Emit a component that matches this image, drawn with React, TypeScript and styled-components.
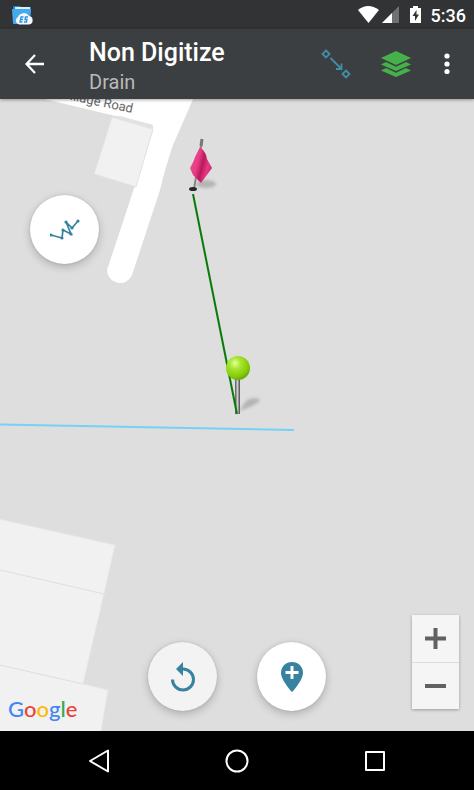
import React from "react";
import styled, { createGlobalStyle } from "styled-components";

const GlobalStyle = createGlobalStyle`
  * { box-sizing: border-box; }
  body {
    margin: 0;
    font-family: Roboto, "Liberation Sans", sans-serif;
  }
`;

const TEAL = "#37839f";

const Screen = styled.div`
  display: flex;
  flex-direction: column;
  min-height: 100vh;
  background: #000;
`;

const StatusBar = styled.div`
  display: flex;
  align-items: center;
  justify-content: space-between;
  height: 29px;
  padding: 0 8px 0 12px;
  background: #323335;
  color: #fff;
`;

const StatusIcons = styled.div`
  display: flex;
  align-items: center;
`;

const Clock = styled.time`
  margin-left: 8px;
  font-size: 18px;
  line-height: 24px;
  font-weight: 500;
  padding-top: 3px;
`;

const Toolbar = styled.header`
  position: relative;
  z-index: 2;
  display: flex;
  align-items: center;
  height: 70px;
  padding: 0 14px 0 15px;
  background: #3c3f41;
  color: #fff;
  box-shadow: 0 1px 3px rgba(0, 0, 0, 0.35);
`;

const IconButton = styled.button`
  display: flex;
  align-items: center;
  justify-content: center;
  flex: none;
  width: 40px;
  height: 48px;
  padding: 0;
  border: 0;
  background: none;
  color: inherit;
  cursor: pointer;
`;

const Titles = styled.div`
  flex: 1;
  min-width: 0;
  padding: 6px 0 0 34px;
`;

const Title = styled.h1`
  margin: 0;
  font-size: 25px;
  line-height: 30px;
  font-weight: 500;
  white-space: nowrap;
`;

const Subtitle = styled.p`
  margin: 0;
  font-size: 20px;
  line-height: 28px;
  color: #b9babb;
`;

const Actions = styled.div`
  display: flex;
  gap: 20px;
`;

const OverflowButton = styled(IconButton)`
  width: 26px;
  margin-left: 18px;
`;

const MapArea = styled.main`
  position: relative;
  flex: 1;
  min-height: 400px;
  overflow: hidden;
  background: #dedede;
`;

const MapCanvas = styled.svg`
  position: absolute;
  inset: 0;
  width: 100%;
  height: 100%;
`;

const RoundButton = styled.button<{ $muted?: boolean }>`
  display: flex;
  align-items: center;
  justify-content: center;
  width: 69px;
  height: 69px;
  padding: 0;
  border: 0;
  border-radius: 50%;
  background: ${(p) => (p.$muted ? "#f3f3f3" : "#fff")};
  color: ${TEAL};
  box-shadow: 0 3px 8px rgba(0, 0, 0, 0.22), 0 0 2px rgba(0, 0, 0, 0.14);
  cursor: pointer;
`;

const DrawSlot = styled.div`
  position: absolute;
  top: 96px;
  left: 30px;
`;

const BottomActions = styled.div`
  position: absolute;
  left: 0;
  right: 0;
  bottom: 20px;
  display: flex;
  justify-content: center;
  gap: 40px;
`;

const ZoomControls = styled.div`
  position: absolute;
  right: 15px;
  bottom: 22px;
  width: 47px;
  background: #f5f5f5;
  box-shadow: 0 1px 3px rgba(0, 0, 0, 0.3);
`;

const ZoomButton = styled.button`
  display: flex;
  align-items: center;
  justify-content: center;
  width: 100%;
  height: 47px;
  padding: 0;
  border: 0;
  background: none;
  color: #616161;
  cursor: pointer;

  & + & {
    border-top: 1px solid #dcdcdc;
  }
`;

const Brand = styled.div`
  position: absolute;
  left: 8px;
  bottom: 8px;
  font-family: Lato, "Liberation Sans", sans-serif;
  font-size: 22px;
  line-height: 28px;
  font-weight: 500;
`;

const Letter = styled.span<{ $color: string }>`
  color: ${(p) => p.$color};
`;

const NavBar = styled.nav`
  display: flex;
  align-items: center;
  justify-content: center;
  gap: 98px;
  height: 59px;
  background: #000;
  color: #fff;
`;

const brandLetters = [
  ["G", "#4285f4"],
  ["o", "#ea4335"],
  ["o", "#fbbc05"],
  ["g", "#4285f4"],
  ["l", "#34a853"],
  ["e", "#ea4335"],
];

function FolderIcon() {
  return (
    <svg width="21" height="20" viewBox="0 0 21 20" aria-hidden="true">
      <path d="M1 2q0-1 1-1h6l1 1h10v4H1z" fill="#1c86cf" />
      <path d="M3 2h15v3H3z" fill="#d9effb" />
      <path d="M0 5q0-1 1-1h17q1 0 1 1l-1 13q0 1-1 1H2q-1 0-1-1z" fill="#45a9ec" />
      <path d="M7 19.500a4 4 0 0 1-1-7.500a6 5.500 0 0 1 11-1a4.300 4.300 0 0 1 0 8.500z" fill="#f2f9fe" />
      <path d="M11.500 12H9l-1 5h2.500M9 14.500h2M16 12h-2.500l-.5 2.500h2l-.5 2.500H12" fill="none" stroke="#2f92dc" strokeWidth="1.300" />
    </svg>
  );
}

function StatusGlyphs() {
  return (
    <svg width="65" height="20" viewBox="0 0 65 20" aria-hidden="true">
      <path d="M0 5Q10-3 21 5L10.500 18z" fill="#fff" />
      <path d="M41 1v17H24z" fill="#707173" />
      <path d="M34 8v10H24z" fill="#fff" />
      <path d="M55 1h5v2h3v15H52V3h3z" fill="#fff" />
      <path d="M58.500 5l-4 6h2.500v5l4-6.500h-2.500z" fill="#323335" />
    </svg>
  );
}

function BackArrow() {
  return (
    <svg width="20" height="20" viewBox="0 0 20 20" fill="none" stroke="#fff" strokeWidth="2.300" aria-hidden="true">
      <path d="M19 10H2M10 1L1.500 10L10 19" />
    </svg>
  );
}

function SegmentIcon() {
  return (
    <svg width="30" height="30" viewBox="0 0 30 30" fill="none" stroke="#438da9" strokeWidth="1.800" aria-hidden="true">
      <path d="M5 1.500L8.500 5L5 8.500L1.500 5zM25 21.500L28.500 25L25 28.500L21.500 25z" />
      <path d="M9.500 9L20.500 20M20.500 14.500V20H15" />
    </svg>
  );
}

function LayersIcon() {
  return (
    <svg width="30" height="28" viewBox="0 0 30 28" fill="#46b04b" aria-hidden="true">
      <path d="M15 1L30 8L15 15L0 8z" />
      <path d="M0 14.500L5 12L15 16.700L25 12L30 14.500L15 21z" />
      <path d="M0 20.500L5 18L15 22.700L25 18L30 20.500L15 27z" />
    </svg>
  );
}

function MoreIcon() {
  return (
    <svg width="6" height="22" viewBox="0 0 6 22" fill="#fff" aria-hidden="true">
      <circle cx="3" cy="3" r="2.600" />
      <circle cx="3" cy="11" r="2.600" />
      <circle cx="3" cy="18.500" r="2.600" />
    </svg>
  );
}

function PolylineIcon() {
  const points: [number, number][] = [[1, 16], [12, 19], [13, 11], [21, 15], [16, 3], [22, 9], [28, 2]];
  return (
    <svg width="30" height="22" viewBox="0 0 30 22" aria-hidden="true">
      <polyline points={points.join(" ")} fill="none" stroke={TEAL} strokeWidth="1.700" />
      {points.map(([x, y]) => (
        <circle key={x} cx={x} cy={y} r="1.600" fill={TEAL} />
      ))}
    </svg>
  );
}

function UndoIcon() {
  return (
    <svg width="24" height="30" viewBox="0 0 24 30" aria-hidden="true">
      <path d="M1.500 17.500A10.500 10.500 0 1 0 12 7" fill="none" stroke={TEAL} strokeWidth="3" />
      <path d="M12 0v14L5 7z" fill={TEAL} />
    </svg>
  );
}

function AddPlaceIcon() {
  return (
    <svg width="22" height="30" viewBox="0 0 22 30" aria-hidden="true">
      <path d="M11 0C4.800 0 0 4.700 0 10.700C0 18.500 11 30 11 30S22 18.500 22 10.700C22 4.700 17.200 0 11 0z" fill={TEAL} />
      <path d="M11 4v13M4.500 10.500h13" stroke="#fff" strokeWidth="3" />
    </svg>
  );
}

function FlagMarker() {
  return (
    <g>
      <ellipse cx="206" cy="85" rx="10" ry="4" fill="#777" opacity="0.4" filter="url(#soft)" />
      <path d="M202 42L194 90" stroke="#888" strokeWidth="2" />
      <path d="M202 40L201 47" stroke="#777" strokeWidth="3" />
      <ellipse cx="193" cy="90" rx="4" ry="2" fill="#272727" />
      <path d="M200 48Q206 53 207 60L212 69L201 84Q196 79 193 76L190 69Q194 62 195 58Z" fill="url(#flag)" />
    </g>
  );
}

function PinNeedle() {
  return (
    <g>
      <path d="M239 312L247 301Q257 297 260 301Q256 307 239 312z" fill="#777" opacity="0.4" filter="url(#soft)" />
      <rect x="235" y="278" width="5" height="37" fill="url(#needle)" />
    </g>
  );
}

function MapDrawing() {
  return (
    <MapCanvas role="img" aria-label="Map with a measured line between two markers">
      <defs>
        <filter id="soft" x="-30%" y="-50%" width="160%" height="200%">
          <feGaussianBlur stdDeviation="1.500" />
        </filter>
        <linearGradient id="flag" x1="0" y1="0.300" x2="1" y2="0.700">
          <stop offset="0" stopColor="#ed4c92" />
          <stop offset="0.350" stopColor="#e63c86" />
          <stop offset="0.550" stopColor="#b81b5b" />
          <stop offset="0.780" stopColor="#e93884" />
          <stop offset="1" stopColor="#c82267" />
        </linearGradient>
        <linearGradient id="needle">
          <stop offset="0" stopColor="#555" />
          <stop offset="0.500" stopColor="#ccc" />
          <stop offset="1" stopColor="#444" />
        </linearGradient>
        <radialGradient id="ball" cx="0.380" cy="0.300" r="0.700">
          <stop offset="0" stopColor="#e4ff9c" />
          <stop offset="0.350" stopColor="#a7e52f" />
          <stop offset="0.800" stopColor="#86cb0b" />
          <stop offset="1" stopColor="#6aac08" />
        </radialGradient>
      </defs>
      <path d="M36 -2L153 26V32L107 171A13 13 0 0 0 132 176L160 91Q166 66 173 46L194 -2z" fill="#fff" />
      <path d="M112 18L153 30L136 88L94 75z" fill="#f1f1f1" stroke="#e2e2e2" />
      <path d="M112 18L120 17L153 26V30z" fill="#e2e2e2" />
      <text x="132" y="14" transform="rotate(12 132 14)" textAnchor="end" fontSize="13" fill="#666">
        Village Road
      </text>
      <path d="M-1 420L115 446L104 495L83 585L108 591L98 650H-1z" fill="#f1f1f1" stroke="#e6e6e6" />
      <path d="M0 471L104 495M0 566L83 585" stroke="#dedede" fill="none" />
      <path d="M0 325.500L294 331" stroke="#76d1f4" strokeWidth="2" />
      <PinNeedle />
      <path d="M193 95L237 315" stroke="#087a08" strokeWidth="2" />
      <circle cx="238" cy="269" r="12" fill="url(#ball)" />
      <FlagMarker />
    </MapCanvas>
  );
}

export default function App() {
  return (
    <>
      <GlobalStyle />
      <Screen>
        <StatusBar>
          <FolderIcon />
          <StatusIcons>
            <StatusGlyphs />
            <Clock>5:36</Clock>
          </StatusIcons>
        </StatusBar>
        <Toolbar>
          <IconButton type="button" aria-label="Back">
            <BackArrow />
          </IconButton>
          <Titles>
            <Title>Non Digitize</Title>
            <Subtitle>Drain</Subtitle>
          </Titles>
          <Actions>
            <IconButton type="button" aria-label="Segment">
              <SegmentIcon />
            </IconButton>
            <IconButton type="button" aria-label="Layers">
              <LayersIcon />
            </IconButton>
          </Actions>
          <OverflowButton type="button" aria-label="More options">
            <MoreIcon />
          </OverflowButton>
        </Toolbar>
        <MapArea>
          <MapDrawing />
          <DrawSlot>
            <RoundButton type="button" aria-label="Draw line">
              <PolylineIcon />
            </RoundButton>
          </DrawSlot>
          <Brand>
            {brandLetters.map(([letter, color], i) => (
              <Letter key={i} $color={color}>
                {letter}
              </Letter>
            ))}
          </Brand>
          <BottomActions>
            <RoundButton type="button" $muted aria-label="Undo">
              <UndoIcon />
            </RoundButton>
            <RoundButton type="button" aria-label="Add point">
              <AddPlaceIcon />
            </RoundButton>
          </BottomActions>
          <ZoomControls>
            <ZoomButton type="button" aria-label="Zoom in">
              <svg width="21" height="21" stroke="currentColor" strokeWidth="4" aria-hidden="true">
                <path d="M10.500 0v21M0 10.500h21" />
              </svg>
            </ZoomButton>
            <ZoomButton type="button" aria-label="Zoom out">
              <svg width="21" height="4" stroke="currentColor" strokeWidth="4" aria-hidden="true">
                <path d="M0 2h21" />
              </svg>
            </ZoomButton>
          </ZoomControls>
        </MapArea>
        <NavBar>
          <IconButton type="button" aria-label="Back">
            <svg width="22" height="24" fill="none" stroke="currentColor" strokeWidth="2" strokeLinejoin="round" aria-hidden="true">
              <path d="M20 1.500V22.500L2 12z" />
            </svg>
          </IconButton>
          <IconButton type="button" aria-label="Home">
            <svg width="24" height="24" fill="none" stroke="currentColor" strokeWidth="2" aria-hidden="true">
              <circle cx="12" cy="12" r="10.500" />
            </svg>
          </IconButton>
          <IconButton type="button" aria-label="Recent apps">
            <svg width="20" height="20" fill="none" stroke="currentColor" strokeWidth="2" strokeLinejoin="round" aria-hidden="true">
              <path d="M1 1h18v18H1z" />
            </svg>
          </IconButton>
        </NavBar>
      </Screen>
    </>
  );
}
